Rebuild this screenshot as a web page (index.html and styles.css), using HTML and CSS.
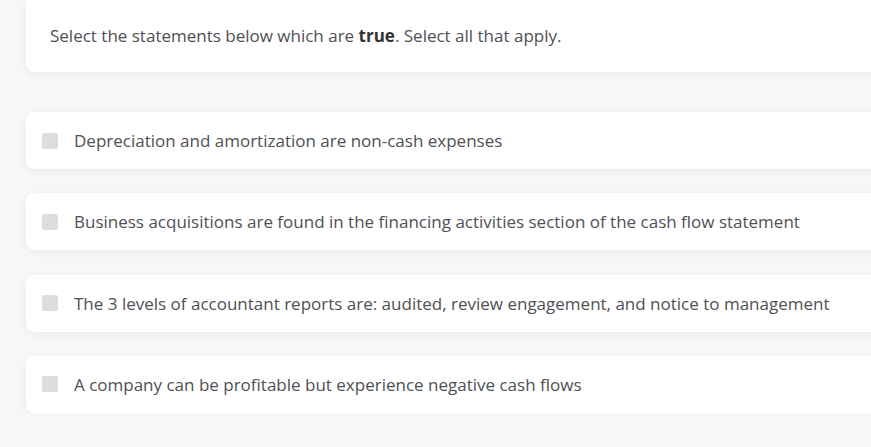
FILE: index.html
```html
<!DOCTYPE html>
<html lang="en">
<head>
<meta charset="utf-8">
<link rel="stylesheet" href="styles.css">
</head>
<body>
<main class="quiz">
  <section class="prompt">
    <p>Select the statements below which are <strong>true</strong>. Select all that apply.</p>
  </section>
  <ul class="options">
    <li class="option"><span class="box"></span><span class="label">Depreciation and amortization are non-cash expenses</span></li>
    <li class="option"><span class="box"></span><span class="label">Business acquisitions are found in the financing activities section of the cash flow statement</span></li>
    <li class="option"><span class="box"></span><span class="label">The 3 levels of accountant reports are: audited, review engagement, and notice to management</span></li>
    <li class="option"><span class="box"></span><span class="label">A company can be profitable but experience negative cash flows</span></li>
  </ul>
</main>
</body>
</html>
```
FILE: styles.css
```css
html, body {
  margin: 0;
  padding: 0;
  background: #f6f7f9;
  overflow: hidden;
}
body {
  font-family: "Open Sans", "Noto Sans", sans-serif;
  font-size: 17px;
  color: #505055;
}
.quiz {
  margin-left: 26px;
  width: 870px;
}
.prompt {
  background: #fff;
  border-radius: 0 0 8px 8px;
  height: 72px;
  box-sizing: border-box;
  padding: 0 24px;
  display: flex;
  align-items: center;
  box-shadow: 0 2px 8px rgba(0,0,0,0.06);
}
.prompt p {
  margin: 0;
  padding-bottom: 2px;
}
.prompt strong {
  color: #333;
  font-weight: 700;
}
.options {
  list-style: none;
  margin: 40px 0 0;
  padding: 0;
  display: flex;
  flex-direction: column;
  gap: 24.3px;
}
.option {
  background: #fff;
  border-radius: 8px;
  height: 57px;
  display: flex;
  align-items: center;
  padding-left: 16px;
  gap: 16px;
  box-shadow: 0 2px 8px rgba(0,0,0,0.06);
}
.box {
  width: 16px;
  height: 16px;
  border-radius: 2px;
  background: #dcdde0;
  flex: none;
}
.label {
  white-space: nowrap;
}
```
